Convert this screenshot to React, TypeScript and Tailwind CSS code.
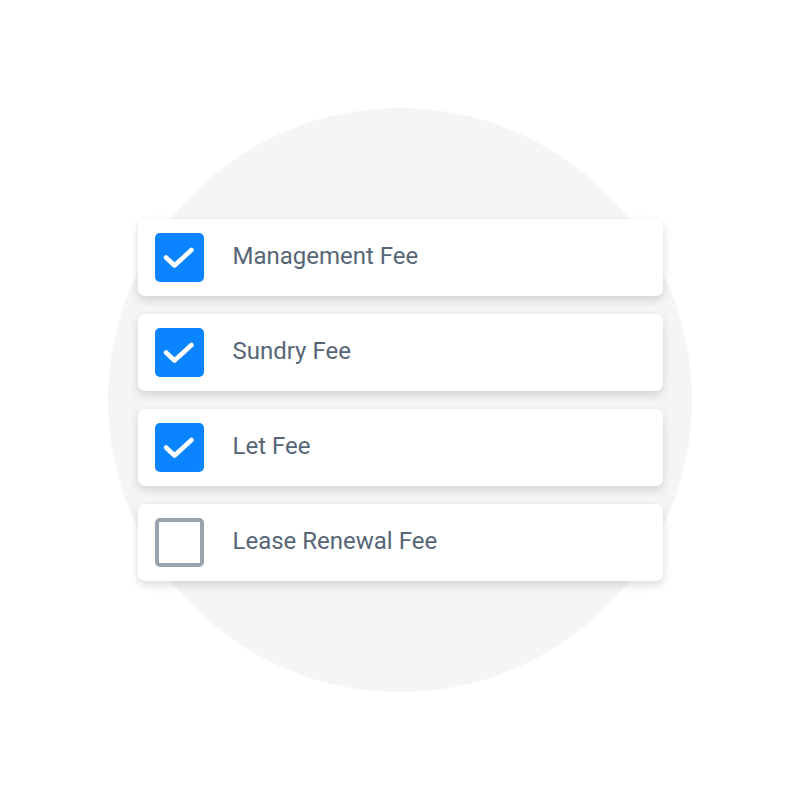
const fees = [
  { label: "Management Fee", checked: true },
  { label: "Sundry Fee", checked: true },
  { label: "Let Fee", checked: true },
  { label: "Lease Renewal Fee", checked: false },
];

function Box({ checked }: { checked: boolean }) {
  if (!checked) {
    return <div className="h-[49px] w-[49px] shrink-0 rounded-[5px] border-[4px] border-[#98a3ae] bg-white" />;
  }
  return (
    <div className="flex h-[49px] w-[49px] shrink-0 items-center justify-center rounded-[5px] bg-[#0a84ff]">
      <svg viewBox="0 0 49 49" className="h-[49px] w-[49px]">
        <path
          d="M11 24.5 L19.5 32.5 L36.5 17"
          fill="none"
          stroke="white"
          strokeWidth="4.5"
          strokeLinecap="round"
          strokeLinejoin="round"
        />
      </svg>
    </div>
  );
}

export default function App() {
  return (
    <div className="flex h-[800px] w-[800px] items-center justify-center bg-white font-['Roboto',sans-serif]">
      <div className="flex h-[584px] w-[584px] flex-col items-center justify-center gap-[18px] rounded-full bg-[#f4f5f7]">
        {fees.map((fee) => (
          <div
            key={fee.label}
            className="flex h-[77px] w-[525px] items-center gap-[29px] rounded-[7px] bg-white pl-[17px] shadow-[0_4px_10px_rgba(0,0,0,0.14)]"
          >
            <Box checked={fee.checked} />
            <span className="mb-[4px] text-[24px] leading-none text-[#566676]">{fee.label}</span>
          </div>
        ))}
      </div>
    </div>
  );
}
